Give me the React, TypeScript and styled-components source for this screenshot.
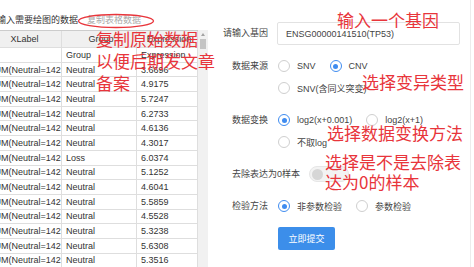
import React from "react";
import styled, { createGlobalStyle } from "styled-components";

const GlobalStyle = createGlobalStyle`
  html, body {
    margin: 0;
    padding: 0;
    background: #fff;
  }
  body {
    font-family: "Liberation Sans", "Noto Sans CJK SC", Arial, sans-serif;
    color: #333;
  }
`;

const Page = styled.div`
  position: relative;
  display: flex;
  width: 474px;
  height: 267px;
  overflow: hidden;
`;

/* ---------- left: data grid ---------- */

const LeftPanel = styled.div`
  display: flex;
  flex-direction: column;
  flex: 0 0 224px;
  margin-left: -16px;
`;

const TitleBar = styled.div`
  display: flex;
  align-items: center;
  gap: 9px;
  height: 30px;
  padding-top: 8px;
  padding-left: 13px;
  box-sizing: border-box;
  font-size: 9px;
  white-space: nowrap;
`;

const TitleText = styled.span`
  color: #333;
`;

const CopyLink = styled.span`
  color: #aaa;
`;

const GridWrap = styled.div`
  display: flex;
  flex: 1;
  min-height: 0;
`;

const Grid = styled.div`
  display: flex;
  flex-direction: column;
  width: 214px;
  border-top: 1px solid #ccc;
  overflow: hidden;
`;

const GridRow = styled.div<{ $head?: boolean }>`
  display: grid;
  grid-template-columns: 78px 75px 61px;
  flex: 0 0 ${(p) => (p.$head ? "17px" : "14.7px")};
  box-sizing: border-box;
  border-bottom: 1px solid #dedede;
  background: ${(p) => (p.$head ? "#f0f0f0" : "#fff")};
  font-size: 9px;
`;

const Cell = styled.div<{ $center?: boolean }>`
  display: flex;
  align-items: center;
  justify-content: ${(p) => (p.$center ? "center" : "flex-start")};
  padding-left: 4px;
  border-right: 1px solid #dedede;
  white-space: nowrap;
  overflow: hidden;
  color: #333;
`;

const Scrollbar = styled.div`
  display: flex;
  flex-direction: column;
  align-items: center;
  width: 10px;
  background: #f1f1f1;
  padding-top: 3px;
  gap: 3px;
`;

const ScrollArrow = styled.div`
  width: 0;
  height: 0;
  border-left: 2px solid transparent;
  border-right: 2px solid transparent;
  border-bottom: 3px solid #a3a3a3;
`;

const ScrollThumb = styled.div`
  width: 6px;
  height: 10px;
  background: #c4c4c4;
`;

/* ---------- right: form ---------- */

const RightPanel = styled.div`
  display: flex;
  flex-direction: column;
  gap: 10px;
  flex: 0 0 238px;
  margin-left: 8px;
  padding: 22px 0 0 16px;
  border-right: 1px solid #ececec;
  font-size: 9px;
  color: #555;
`;

const FormRow = styled.div<{ $outdent?: boolean }>`
  display: flex;
  align-items: flex-start;
  margin-left: ${(p) => (p.$outdent ? "-9px" : "0")};
`;

const Label = styled.div`
  min-width: 36px;
  margin-right: 9px;
  line-height: 22px;
  white-space: nowrap;
  color: #444;
`;

const TextInput = styled.div`
  display: flex;
  align-items: center;
  width: 183px;
  height: 23px;
  box-sizing: border-box;
  padding-left: 8px;
  border: 1px solid #e2e2e2;
  border-radius: 2px;
  color: #444;
`;

const RadioGroup = styled.div`
  display: flex;
  flex-wrap: wrap;
  width: 186px;
  margin-left: 1px;
`;

const RadioItem = styled.label`
  display: flex;
  align-items: center;
  gap: 7px;
  height: 22px;
  margin-right: 14px;
  white-space: nowrap;
  color: #444;
`;

const RadioDot = styled.span<{ $on?: boolean }>`
  display: inline-flex;
  align-items: center;
  justify-content: center;
  width: 12px;
  height: 12px;
  box-sizing: border-box;
  border-radius: 50%;
  border: 1px solid ${(p) => (p.$on ? "#3f8cf0" : "#cfcfcf")};
  background: #fff;
  &::after {
    content: "";
    width: 5px;
    height: 5px;
    border-radius: 50%;
    background: ${(p) => (p.$on ? "#3f8cf0" : "transparent")};
  }
`;

const Switch = styled.div`
  display: flex;
  align-items: center;
  width: 40px;
  height: 16px;
  margin-top: 3px;
  padding-left: 2px;
  box-sizing: border-box;
  border-radius: 8px;
  background: #f3f3f3;
  border: 1px solid #e6e6e6;
`;

const SwitchKnob = styled.span`
  width: 11px;
  height: 11px;
  border-radius: 50%;
  background: #d6d6d6;
`;

const SubmitButton = styled.button`
  width: 57px;
  height: 23px;
  margin-left: 46px;
  border: none;
  border-radius: 2px;
  background: #3c8eea;
  color: #fff;
  font-family: inherit;
  font-size: 9px;
  padding: 0;
`;

/* ---------- red annotations ---------- */

const Note = styled.div<{ $x: number; $y: number; $lh?: number }>`
  position: absolute;
  left: ${(p) => p.$x}px;
  top: ${(p) => p.$y}px;
  font-family: "Noto Sans CJK SC", sans-serif;
  font-size: 17px;
  line-height: ${(p) => p.$lh ?? 22}px;
  color: #e8353b;
  white-space: pre;
  pointer-events: none;
`;

const Ellipse = styled.svg`
  position: absolute;
  left: 77px;
  top: 13px;
`;

const rows: [string, string][] = [
  ["Neutral", "3.6696"],
  ["Neutral", "4.9175"],
  ["Neutral", "5.7247"],
  ["Neutral", "6.2733"],
  ["Neutral", "4.6136"],
  ["Neutral", "4.3017"],
  ["Loss", "6.0374"],
  ["Neutral", "5.1252"],
  ["Neutral", "4.6041"],
  ["Neutral", "5.5859"],
  ["Neutral", "4.5528"],
  ["Neutral", "5.3238"],
  ["Neutral", "5.6308"],
  ["Neutral", "5.3516"],
  ["Neutral", "4.8821"],
];

const Radio = ({ on, children }: { on?: boolean; children: React.ReactNode }) => (
  <RadioItem>
    <RadioDot $on={on} />
    {children}
  </RadioItem>
);

export default function App() {
  return (
    <>
      <GlobalStyle />
      <Page>
        <LeftPanel>
          <TitleBar>
            <TitleText>输入需要绘图的数据</TitleText>
            <CopyLink>复制表格数据</CopyLink>
          </TitleBar>
          <GridWrap>
            <Grid>
              <GridRow $head>
                <Cell $center>XLabel</Cell>
                <Cell $center>Group</Cell>
                <Cell $center>Expression</Cell>
              </GridRow>
              <GridRow>
                <Cell />
                <Cell>Group</Cell>
                <Cell>Expression</Cell>
              </GridRow>
              {rows.map(([g, v], i) => (
                <GridRow key={i}>
                  <Cell>NUM(Neutral=142,Loss=8)</Cell>
                  <Cell>{g}</Cell>
                  <Cell>{v}</Cell>
                </GridRow>
              ))}
            </Grid>
            <Scrollbar>
              <ScrollArrow />
              <ScrollThumb />
            </Scrollbar>
          </GridWrap>
        </LeftPanel>

        <RightPanel>
          <FormRow $outdent>
            <Label>请输入基因</Label>
            <TextInput>ENSG00000141510(TP53)</TextInput>
          </FormRow>
          <FormRow>
            <Label>数据来源</Label>
            <RadioGroup>
              <Radio>SNV</Radio>
              <Radio on>CNV</Radio>
              <Radio>SNV(含同义突变)</Radio>
            </RadioGroup>
          </FormRow>
          <FormRow>
            <Label>数据变换</Label>
            <RadioGroup>
              <Radio on>log2(x+0.001)</Radio>
              <Radio>log2(x+1)</Radio>
              <Radio>不取log</Radio>
            </RadioGroup>
          </FormRow>
          <FormRow>
            <Label>去除表达为0样本</Label>
            <Switch>
              <SwitchKnob />
            </Switch>
          </FormRow>
          <FormRow>
            <Label>检验方法</Label>
            <RadioGroup>
              <Radio on>非参数检验</Radio>
              <Radio>参数检验</Radio>
            </RadioGroup>
          </FormRow>
          <FormRow>
            <SubmitButton>立即提交</SubmitButton>
          </FormRow>
        </RightPanel>

        <Ellipse width="78" height="16" viewBox="0 0 78 16">
          <ellipse cx="39" cy="8" rx="37.5" ry="6.5" fill="none" stroke="#e8353b" strokeWidth="1.3" />
        </Ellipse>
        <Note $x={96} $y={28}>{"复制原始数据\n以便后期发文章\n备案"}</Note>
        <Note $x={337} $y={9}>输入一个基因</Note>
        <Note $x={362} $y={71}>选择变异类型</Note>
        <Note $x={327} $y={122}>选择数据变换方法</Note>
        <Note $x={325} $y={152} $lh={20}>{"选择是不是去除表\n达为0的样本"}</Note>
      </Page>
    </>
  );
}
